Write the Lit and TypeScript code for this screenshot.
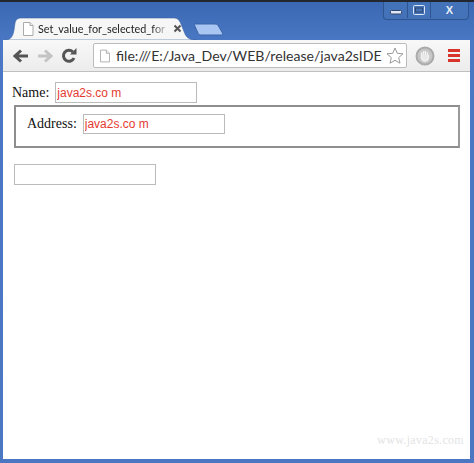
import { LitElement, html, css } from "lit";
import { customElement } from "lit/decorators.js";

@customElement("app-root")
export class AppRoot extends LitElement {
  static styles = css`
    :host { display: block; width: 474px; height: 463px; overflow: hidden; }
    .frame {
      height: 463px; box-sizing: border-box; display: flex; flex-direction: column;
      padding: 0 4px 4px 3px;
      background: linear-gradient(#3a68b2 0, #4a78c4 40px, #4a76c2 100%);
      border-top: 2px solid #23272f;
    }
    .strip { height: 38px; flex: none; display: flex; align-items: flex-end; padding-left: 2px; position: relative; }
    .tab { position: relative; width: 192px; height: 23px; flex: none; display: flex; align-items: center;
      padding: 0 0 0 17px; box-sizing: border-box; font: 10.8px Lato, "Open Sans", sans-serif; color: #222; }
    .tabshape { position: absolute; left: 0; top: 0; }
    .tab > span, .tab > .ic { position: relative; }
    .title { width: 127px; margin-left: 4px; overflow: hidden; white-space: nowrap; line-height: 16px;
      -webkit-mask-image: linear-gradient(90deg, #000 90%, rgba(0,0,0,.25));
      mask-image: linear-gradient(90deg, #000 90%, rgba(0,0,0,.25)); }
    .close { margin-left: 8px; }
    .newtab { flex: none; margin: 0 0 4px -4px; }
    .controls { position: absolute; right: 1px; top: 0; display: flex; height: 17px;
      border: 1px solid #2f5590; border-top: none; border-radius: 0 0 4px 4px;
      background: linear-gradient(#4373b9, #4472b8); }
    .controls div { display: flex; align-items: center; justify-content: center; height: 16px; box-sizing: border-box; }
    .controls div + div { border-left: 1px solid #2f5590; }
    .min { width: 23px; padding-top: 5px; } .max { width: 23px; } .x { width: 38px; font: bold 11px "Liberation Sans", sans-serif; color: #e8eef8; }
    .toolbar { height: 32px; flex: none; display: flex; align-items: center; background: linear-gradient(#f8f8f8, #ececec);
      border-bottom: 1px solid #c0c0c0; box-sizing: border-box; padding-left: 10px; }
    .nav { display: flex; gap: 8px; align-items: center; width: 80px; flex: none; }
    .omni { width: 314px; height: 25px; flex: none; box-sizing: border-box; border: 1px solid #bcbcbc; border-radius: 2px; background: #fff;
      display: flex; align-items: center; padding-left: 6px; gap: 6px; font: 14.1px Lato, "Open Sans", sans-serif; color: #333; }
    .url { width: 267px; overflow: hidden; white-space: nowrap; line-height: 20px; }
    .ext { margin-left: 8px; flex: none; }
    .menu { margin-left: 13px; flex: none; display: flex; flex-direction: column; gap: 2px; }
    .menu i { display: block; width: 12px; height: 3px; background: #d9342b; }
    .page { flex: 1; background: #fff; position: relative; box-sizing: border-box; padding: 10px 0 0 9px;
      font: 14px "Liberation Serif", serif; color: #111; display: flex; flex-direction: column; align-items: flex-start; }
    .row { display: flex; align-items: center; gap: 6px; }
    input { box-sizing: border-box; width: 142px; height: 21px; border: 1px solid #bbb; padding: 0 1px; margin: 0; outline: none;
      font: 12px "Liberation Sans", sans-serif; color: #e53a30; background: #fff; }
    .set { width: 446px; height: 43px; box-sizing: border-box; margin: 2px 0 0 2px; border: 2px solid; border-color: #8e8e8e #9a9a9a #8e8e8e #8e8e8e;
      display: flex; align-items: center; padding: 0 0 5px 11px; }
    .set input { height: 20px; }
    .last { margin: 16px 0 0 2px; }
    .mark { position: absolute; right: 6px; bottom: 11px; font: 12px "Liberation Serif", serif; letter-spacing: .3px; color: #e4e4e4; }
  `;
  render() {
    return html`<div class="frame">
      <div class="strip">
        <div class="tab">
          <svg class="tabshape" width="192" height="23" viewBox="0 0 192 23"><path d="M0 23 C6 23 8 19 9 13 L10 6 C11 2 13 1 17 1 L168 1 C172 1 174 2 176 7 L180 17 C182 21 185 23 192 23 Z" fill="#f6f6f6" stroke="#3a62a5" stroke-width="0.6"/></svg>
          <svg class="ic" width="12" height="14" viewBox="0 0 12 14"><path d="M1.500 .5H8L11 3.500V13.500H1.500Z" fill="#fff" stroke="#aaa"/><path d="M8 .5V3.500H11" fill="#eee" stroke="#aaa"/></svg>
          <span class="title">Set_value_for_selected_for</span>
          <span class="close"><svg width="9" height="9" viewBox="0 0 9 9" style="display:block"><path d="M1.500 1.500 7.500 7.500M7.500 1.500 1.500 7.500" stroke="#555" stroke-width="2"/></svg></span>
        </div>
        <svg class="newtab" width="31" height="13" viewBox="0 0 31 13"><path d="M1 1H22C24 1 25 2 26 4L29.500 10C30 12 29 12 28 12H8C6 12 5.500 11 5 10Z" fill="#a9c6f2" stroke="#3b64a8"/></svg>
        <div class="controls">
          <div class="min"><svg width="12" height="5"><rect x=".5" y=".5" width="11" height="3.500" rx="1" fill="#dfe8f5" stroke="#33466b"/></svg></div>
          <div class="max"><svg width="12" height="10"><rect x=".5" y=".5" width="11" height="9" rx="1" fill="none" stroke="#dfe8f5"/><rect x="2.500" y="3" width="7" height="4" fill="none" stroke="#33466b"/></svg></div>
          <div class="x">X</div>
        </div>
      </div>
      <div class="toolbar">
        <div class="nav">
          <svg width="16" height="14" viewBox="0 0 16 14"><path d="M15 7H3M8 1.500 2 7l6 5.500" fill="none" stroke="#555" stroke-width="3"/></svg>
          <svg width="16" height="14" viewBox="0 0 16 14"><path d="M1 7H13M8 1.500 14 7l-6 5.500" fill="none" stroke="#c4c4c4" stroke-width="3"/></svg>
          <svg width="16" height="16" viewBox="0 0 16 16"><path d="M13 10A5.500 5.500 0 1 1 11.800 3.800" fill="none" stroke="#555" stroke-width="3"/><path d="M9 6.500H15.500V0Z" fill="#555"/></svg>
        </div>
        <div class="omni">
          <svg width="10" height="14" viewBox="0 0 11 14" style="flex:none"><path d="M.5 .5H7L10.500 4V13.500H.5Z" fill="#fff" stroke="#aaa"/><path d="M7 .5V4H10.500" fill="#eee" stroke="#aaa"/></svg>
          <span class="url">file:///E:/Java_Dev/WEB/release/java2sIDE</span>
          <svg width="18" height="17" viewBox="0 0 18 17" style="flex:none;margin-left:-3px"><path d="M9 1l2.300 5.300 5.700.5-4.300 3.800 1.300 5.600L9 13.300 4 16.200l1.300-5.600L1 6.800l5.700-.5Z" fill="#fff" stroke="#999"/></svg>
        </div>
        <svg class="ext" width="20" height="20" viewBox="0 0 20 20"><circle cx="10" cy="10" r="8.500" fill="#c6c6c6" stroke="#aaa" stroke-width="2"/><path d="M6.500 9V6.500M8.500 9V5M10.500 9V5M12.500 9V6.500M6.500 9C6 13 8 15 10 15S14 13 13.500 9" fill="#e8e8e8" stroke="#f2f2f2" stroke-width="1.500"/></svg>
        <div class="menu"><i></i><i></i><i></i></div>
      </div>
      <div class="page">
        <div class="row"><label>Name:</label><input value="java2s.co m" /></div>
        <div class="set"><div class="row"><label>Address:</label><input value="java2s.co m" /></div></div>
        <input class="last" />
        <div class="mark">www.java2s.com</div>
      </div>
    </div>`;
  }
}
